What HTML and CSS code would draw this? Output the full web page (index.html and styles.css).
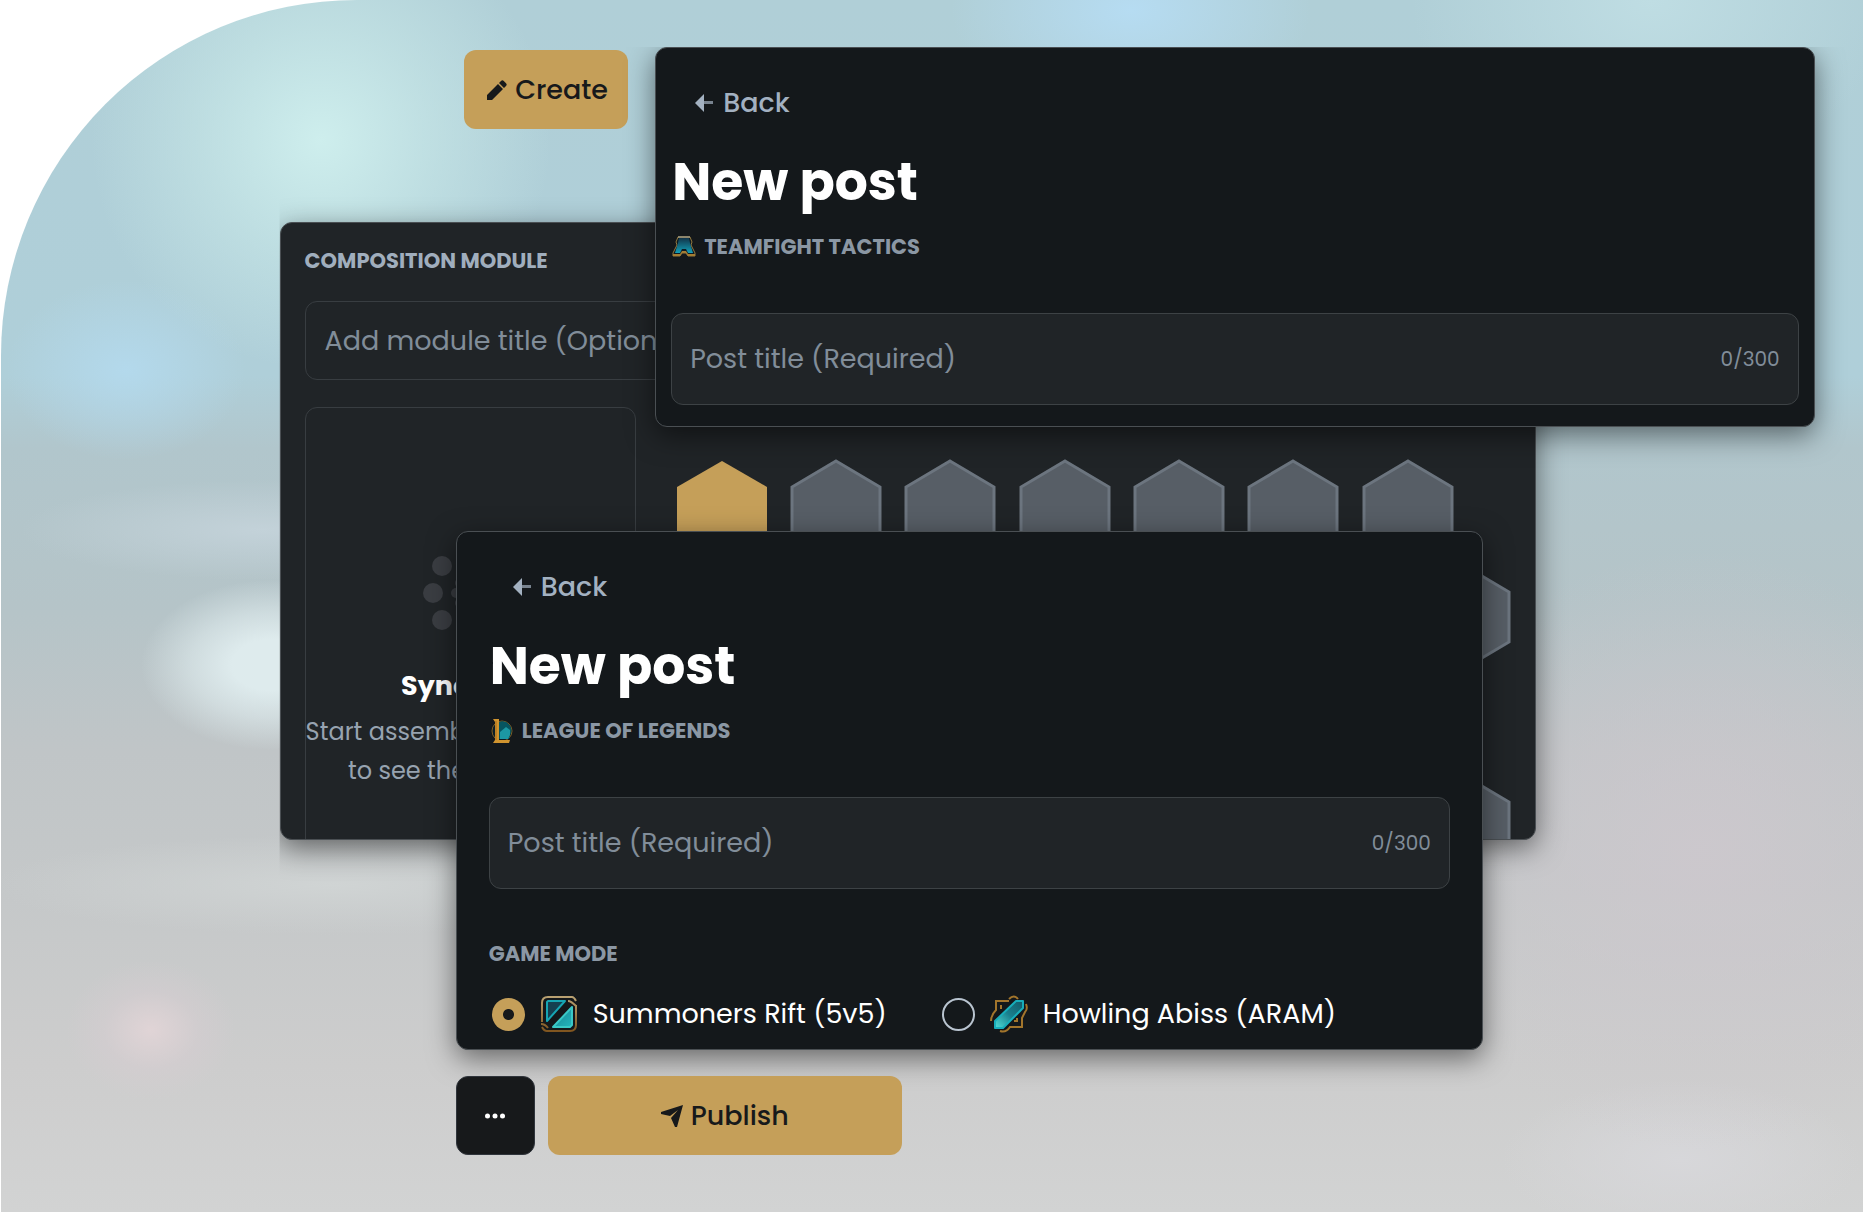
FILE: index.html
```
<!DOCTYPE html>
<html lang="en">
<head>
  <meta charset="UTF-8" />
  <meta name="viewport" content="width=device-width, initial-scale=1" />
  <title>New post</title>
  <link rel="stylesheet" href="styles.css">
</head>
<body>
  <main class="stage">
    <div class="backdrop"></div>

    <button type="button" class="btn btn-gold create-btn">
      <svg class="icon" viewBox="0 0 20 20" fill="currentColor"><path d="M0 20v-5L11 4l5 5L5 20zM12 3l2-2a2 2 0 0 1 2.800 0L19 3.200A2 2 0 0 1 19 6l-2 2z"/></svg>
      Create
    </button>

    <!-- Composition module -->
    <section class="card composition">
      <h2 class="label label-light">COMPOSITION MODULE</h2>
      <input class="module-title" type="text" placeholder="Add module title (Optional)" aria-label="Module title">

      <div class="composition-body">
        <div class="synergies">
          <svg class="synergy-icon" viewBox="0 0 94 74" fill="#3a3d42">
            <circle cx="19" cy="10" r="10"/><circle cx="75" cy="10" r="10"/>
            <circle cx="10" cy="37" r="10"/><circle cx="84" cy="37" r="10"/>
            <circle cx="19" cy="64" r="10"/><circle cx="75" cy="64" r="10"/>
            <circle cx="33" cy="37" r="5"/><circle cx="37" cy="27" r="5"/><circle cx="37" cy="47" r="5"/>
          </svg>
          <h3>Synergies</h3>
          <p>Start assembling your team<br>to see the synergies.</p>
        </div>

        <div class="board">
          <div class="board-row">
            <svg class="hex hex-active" viewBox="0 0 92 106"><path d="M46 2 91 28v50l-45 26L1 78V28z"/></svg>
            <svg class="hex" viewBox="0 0 92 106"><path d="M46 2 90 28v50l-44 26L2 78V28z"/></svg>
            <svg class="hex" viewBox="0 0 92 106"><path d="M46 2 90 28v50l-44 26L2 78V28z"/></svg>
            <svg class="hex" viewBox="0 0 92 106"><path d="M46 2 90 28v50l-44 26L2 78V28z"/></svg>
            <svg class="hex" viewBox="0 0 92 106"><path d="M46 2 90 28v50l-44 26L2 78V28z"/></svg>
            <svg class="hex" viewBox="0 0 92 106"><path d="M46 2 90 28v50l-44 26L2 78V28z"/></svg>
            <svg class="hex" viewBox="0 0 92 106"><path d="M46 2 90 28v50l-44 26L2 78V28z"/></svg>
          </div>
          <div class="board-row">
            <svg class="hex" viewBox="0 0 92 106"><path d="M46 2 90 28v50l-44 26L2 78V28z"/></svg>
            <svg class="hex" viewBox="0 0 92 106"><path d="M46 2 90 28v50l-44 26L2 78V28z"/></svg>
            <svg class="hex" viewBox="0 0 92 106"><path d="M46 2 90 28v50l-44 26L2 78V28z"/></svg>
            <svg class="hex" viewBox="0 0 92 106"><path d="M46 2 90 28v50l-44 26L2 78V28z"/></svg>
            <svg class="hex" viewBox="0 0 92 106"><path d="M46 2 90 28v50l-44 26L2 78V28z"/></svg>
            <svg class="hex" viewBox="0 0 92 106"><path d="M46 2 90 28v50l-44 26L2 78V28z"/></svg>
            <svg class="hex" viewBox="0 0 92 106"><path d="M46 2 90 28v50l-44 26L2 78V28z"/></svg>
          </div>
          <div class="board-row">
            <svg class="hex" viewBox="0 0 92 106"><path d="M46 2 90 28v50l-44 26L2 78V28z"/></svg>
            <svg class="hex" viewBox="0 0 92 106"><path d="M46 2 90 28v50l-44 26L2 78V28z"/></svg>
            <svg class="hex" viewBox="0 0 92 106"><path d="M46 2 90 28v50l-44 26L2 78V28z"/></svg>
            <svg class="hex" viewBox="0 0 92 106"><path d="M46 2 90 28v50l-44 26L2 78V28z"/></svg>
            <svg class="hex" viewBox="0 0 92 106"><path d="M46 2 90 28v50l-44 26L2 78V28z"/></svg>
            <svg class="hex" viewBox="0 0 92 106"><path d="M46 2 90 28v50l-44 26L2 78V28z"/></svg>
            <svg class="hex" viewBox="0 0 92 106"><path d="M46 2 90 28v50l-44 26L2 78V28z"/></svg>
          </div>
          <div class="board-row">
            <svg class="hex" viewBox="0 0 92 106"><path d="M46 2 90 28v50l-44 26L2 78V28z"/></svg>
            <svg class="hex" viewBox="0 0 92 106"><path d="M46 2 90 28v50l-44 26L2 78V28z"/></svg>
            <svg class="hex" viewBox="0 0 92 106"><path d="M46 2 90 28v50l-44 26L2 78V28z"/></svg>
            <svg class="hex" viewBox="0 0 92 106"><path d="M46 2 90 28v50l-44 26L2 78V28z"/></svg>
            <svg class="hex" viewBox="0 0 92 106"><path d="M46 2 90 28v50l-44 26L2 78V28z"/></svg>
            <svg class="hex" viewBox="0 0 92 106"><path d="M46 2 90 28v50l-44 26L2 78V28z"/></svg>
            <svg class="hex" viewBox="0 0 92 106"><path d="M46 2 90 28v50l-44 26L2 78V28z"/></svg>
          </div>
        </div>
      </div>
    </section>

    <!-- Teamfight Tactics post -->
    <section class="card post post-tft">
      <button type="button" class="back">
        <svg class="arrow" viewBox="0 0 18 18" fill="currentColor"><path d="M0 9 9 0v18z"/><path d="M9 7h9v3H9z" opacity=".7"/></svg>
        Back
      </button>
      <h1>New post</h1>
      <p class="label game">
        <svg class="game-icon" viewBox="0 0 24 24">
          <defs>
            <linearGradient id="tft" x1="0" y1="0" x2="0" y2="1"><stop offset="0" stop-color="#123449"/><stop offset="1" stop-color="#12a0b8"/></linearGradient>
          </defs>
          <path d="M6 2h12l2 5-1 3 4 8v3h-7l-2-3h-4l-2 3H1v-3l4-8-1-3z" fill="#0d1a22" stroke="#93793f"/>
          <path d="M7 3h10l1 5 3 10h-5l-2-4h-4l-2 4H3L6 8z" fill="url(#tft)"/>
          <path d="M1 19h7l2-3h4l2 3h7v2h-7l-2-3h-4l-2 3H1z" fill="#a47d34"/>
          <path d="M6 2h12" stroke="#c9c3ac"/>
        </svg>
        TEAMFIGHT TACTICS
      </p>
      <div class="field">
        <input type="text" placeholder="Post title (Required)" aria-label="Teamfight Tactics post title" maxlength="300">
        <span class="counter">0/300</span>
      </div>
    </section>

    <!-- League of Legends post -->
    <div class="lol-column">
      <section class="card post post-lol">
        <button type="button" class="back">
          <svg class="arrow" viewBox="0 0 18 18" fill="currentColor"><path d="M0 9 9 0v18z"/><path d="M9 7h9v3H9z" opacity=".7"/></svg>
          Back
        </button>
        <h1>New post</h1>
        <p class="label game">
          <svg class="game-icon" viewBox="0 0 24 24">
            <circle cx="12" cy="12" r="10" fill="#0b1e27" stroke="#7d5d24"/>
            <path d="M9 3a9 9 0 0 1 11 13l-1 4H9z" fill="#075560"/>
            <path d="M10 13l6-5 4 3v5l-2 4h-8z" fill="#1c98a3"/>
            <path d="M3 0h6v21h11l-1 3H3l2-3V3z" fill="#d0942f"/>
            <path d="M6 2v19" stroke="#a86c1c"/>
          </svg>
          LEAGUE OF LEGENDS
        </p>
        <div class="field">
          <input type="text" placeholder="Post title (Required)" aria-label="League of Legends post title" maxlength="300">
          <span class="counter">0/300</span>
        </div>

        <fieldset class="modes">
          <legend class="label">GAME MODE</legend>
          <div class="mode-list">
            <label class="mode">
              <input type="radio" name="mode" checked>
              <svg class="mode-icon" viewBox="0 0 38 38" fill="none">
                <defs>
                  <linearGradient id="gold" x1="0" y1="0" x2="0" y2="1"><stop offset="0" stop-color="#b9a172"/><stop offset="1" stop-color="#80551f"/></linearGradient>
                  <linearGradient id="rift" x1="0" y1="0" x2="1" y2="1"><stop offset="0" stop-color="#17828f"/><stop offset="1" stop-color="#24b5bd"/></linearGradient>
                </defs>
                <path d="M2 27V8q0-6 6-6h24q2 0 4 4M36 10v20q0 6-6 6H7q-3 0-5-4M28 6q3 0 8 5M1 29q4 0 7 4" stroke="url(#gold)" stroke-width="2"/>
                <path d="M8 6h17L7 26V7z" fill="#153f50" stroke="#16a5b3" stroke-width="2" stroke-linejoin="round"/>
                <path d="M32 12v18l-2 2H13z" fill="url(#rift)" stroke="#3ac8c6" stroke-width="2" stroke-linejoin="round"/>
              </svg>
              Summoners Rift (5v5)
            </label>
            <label class="mode">
              <input type="radio" name="mode">
              <svg class="mode-icon" viewBox="0 0 38 38" fill="none">
                <defs>
                  <linearGradient id="abyss" x1="1" y1="0" x2="0" y2="1"><stop offset="0" stop-color="#125a69"/><stop offset=".5" stop-color="#197f8d"/><stop offset="1" stop-color="#4fe0d8"/></linearGradient>
                </defs>
                <path d="M19 6H6v9q-5 5-5 11M19 4q5-5 9 0M36 9q2 5-1 8l-3 6v9H20q-4 6-10 4" stroke="#a2752c" stroke-width="2"/>
                <path d="M27 23v3h-3M11 10v4" stroke="#a2752c" stroke-width="2"/>
                <path d="M26 6h7v7L13 33H5v-7z" fill="url(#abyss)" stroke="#17aebb" stroke-width="2" stroke-linejoin="round"/>
              </svg>
              Howling Abiss (ARAM)
            </label>
          </div>
        </fieldset>
      </section>

      <div class="actions">
        <button type="button" class="btn more-btn" aria-label="More options">
          <svg class="icon" viewBox="0 0 20 20" fill="currentColor"><circle cx="2.500" cy="10" r="2.500"/><circle cx="10" cy="10" r="2.500"/><circle cx="17.500" cy="10" r="2.500"/></svg>
        </button>
        <button type="button" class="btn btn-gold publish-btn">
          <svg class="icon icon-plane" viewBox="0 0 22 22" fill="currentColor"><path d="M22 0 0 7v2l9 2 8-6zM22 0 16 22h-2l-4-9 7-8z"/></svg>
          Publish
        </button>
      </div>
    </div>
  </main>
</body>
</html>
```

FILE: styles.css
```
* {
  box-sizing: border-box;
}

body {
  margin: 0;
  background: #fff;
  font-family: Poppins, Inter, sans-serif;
  font-size: 27px;
  color: #fff;
}

h1, h2, h3, p {
  margin: 0;
}

button, input {
  font-family: inherit;
  font-size: inherit;
}

button {
  cursor: pointer;
}

.stage {
  position: relative;
  min-height: max(100vh, 1212px);
  overflow: hidden;
}

/* Blurred artwork behind the cards */
.backdrop {
  position: absolute;
  inset: 0 1px;
  border-top-left-radius: 356px;
  background:
    radial-gradient(ellipse 130px 85px at 270px 665px, rgba(222, 235, 237, 1) 30%, rgba(222, 235, 237, 0.6) 62%, rgba(222, 235, 237, 0)),
    radial-gradient(ellipse 230px 230px at 320px 140px, #ceeeed, rgba(200, 232, 232, 0.6) 50%, rgba(200, 232, 232, 0)),
    radial-gradient(ellipse 120px 90px at 125px 370px, rgba(180, 218, 238, 0.9), rgba(180, 218, 238, 0)),
    radial-gradient(ellipse 180px 110px at 1130px 10px, #b6dcf2, rgba(182, 220, 242, 0)),
    radial-gradient(ellipse 240px 180px at 1650px 0, #bfdde3, rgba(191, 221, 227, 0)),
    radial-gradient(ellipse 85px 70px at 150px 1030px, #e0d4d6, rgba(214, 205, 209, 0.5) 55%, rgba(208, 202, 206, 0)),
    radial-gradient(ellipse 300px 300px at 1700px 850px, rgba(206, 200, 206, 0.8), rgba(206, 200, 206, 0)),
    radial-gradient(ellipse 180px 80px at 1680px 1160px, #d7d7da, rgba(215, 215, 218, 0)),
    radial-gradient(ellipse 340px 50px at 330px 885px, #d0d4d4, rgba(208, 212, 212, 0)),
    radial-gradient(ellipse 240px 50px at 260px 530px, #c3d2d9, rgba(195, 210, 217, 0)),
    linear-gradient(#b0cfd7, #afcfd9 31%, #b1c6cc 37%, #b5c4c8 50%, #c0c5c7 62%, #c5c8c9 74%, #cdcdcd 88%, #d2d3d3);
}

/* Buttons */
.btn {
  display: flex;
  align-items: center;
  justify-content: center;
  gap: 8px;
  height: 79px;
  border: 0;
  border-radius: 12px;
  font-weight: 500;
}

.btn-gold {
  background: #c59f59;
  color: #17191b;
}

.icon {
  width: 20px;
  height: 20px;
}

.icon-plane {
  width: 22px;
  height: 22px;
}

.create-btn {
  position: absolute;
  top: 50px;
  left: 24.9%;
  padding: 0 20px 0 23px;
}

/* Cards */
.card {
  background: #14181b;
  border: 1px solid #4a4f53;
  border-radius: 12px;
  box-shadow: 0 8px 28px rgba(0, 0, 0, 0.5);
}

.label {
  font-size: 21px;
  font-weight: 700;
  line-height: 22px;
  color: #8b97a4;
}

.label-light {
  color: #a0aebd;
}

input::placeholder {
  color: #818d99;
  opacity: 1;
}

/* Composition module */
.composition {
  position: absolute;
  top: 222px;
  bottom: 372px;
  left: 15%;
  width: 67.4%;
  padding: 27px 24px 0;
  background: #202427;
  overflow: hidden;
  clip-path: inset(-40px -50px -50px 0);
}

.module-title {
  display: block;
  width: 100%;
  height: 79px;
  margin-top: 29px;
  padding: 0 19px;
  background: transparent;
  border: 1px solid #383d41;
  border-radius: 12px;
  color: #fff;
}

.composition-body {
  display: flex;
  gap: 40px;
  margin-top: 27px;
}

.synergies {
  flex: 0 0 331px;
  min-width: 0;
  height: 520px;
  padding-top: 148px;
  border: 1px solid #383d41;
  border-radius: 12px;
  text-align: center;
  white-space: nowrap;
}

.synergy-icon {
  display: block;
  width: 94px;
  height: 74px;
  margin: 0 auto;
}

.synergies h3 {
  margin-top: 36px;
  font-size: 27px;
  line-height: 40px;
}

.synergies p {
  margin-top: 6px;
  font-size: 24px;
  line-height: 39px;
  color: #97a3b0;
}

.board {
  flex: 1;
  padding-top: 52px;
}

.board-row {
  display: flex;
  justify-content: space-between;
  width: calc(100% - 57px);
  height: 105px;
}

.board-row:nth-child(even) {
  margin-left: 57px;
}

.hex {
  width: 92px;
  height: 106px;
  fill: #575e66;
  stroke: #6c757f;
  stroke-width: 3px;
}

.hex-active {
  fill: #c59f59;
  stroke: none;
}

/* Post cards */
.post {
  padding: 35px 32px 15px;
}

.post-tft {
  position: absolute;
  top: 47px;
  left: 35.15%;
  width: 62.2%;
  padding: 35px 15px 21px;
  clip-path: inset(0 -50px -50px -50px);
}

.back {
  display: flex;
  align-items: center;
  gap: 10px;
  height: 40px;
  padding: 0 24px;
  background: none;
  border: 0;
  font-weight: 500;
  color: #a3b1c1;
}

.arrow {
  width: 18px;
  height: 18px;
}

.post h1 {
  margin-top: 29px;
  padding-left: 1px;
  font-size: 52px;
  font-weight: 700;
  line-height: 60px;
}

.game {
  display: flex;
  align-items: center;
  gap: 8px;
  margin-top: 23px;
  padding-left: 1px;
}

.game-icon {
  width: 24px;
  height: 24px;
}

.field {
  display: flex;
  align-items: center;
  height: 92px;
  margin-top: 54px;
  padding: 0 18px;
  background: #202427;
  border: 1px solid #3d4245;
  border-radius: 12px;
}

.field input {
  flex: 1;
  min-width: 0;
  height: 100%;
  padding: 0;
  background: none;
  border: 0;
  color: #fff;
}

.counter {
  font-size: 20px;
  color: #818d99;
}

.modes {
  margin: 54px 0 0;
  padding: 0;
  border: 0;
}

.modes legend {
  padding: 0;
}

.mode-list {
  display: flex;
  gap: 55px;
  padding: 29px 3px 0;
}

.mode {
  display: flex;
  align-items: center;
  gap: 15px;
}

.mode input {
  appearance: none;
  width: 33px;
  height: 33px;
  margin: 0;
  border: 2px solid #b9c4d0;
  border-radius: 50%;
}

.mode input:checked {
  border: 0;
  background: radial-gradient(circle, #17191b 5px, #c59f59 6px);
}

.mode-icon {
  width: 38px;
  height: 38px;
}

.lol-column {
  position: absolute;
  top: 531px;
  left: 24.45%;
  width: 55.1%;
}

.actions {
  display: flex;
  gap: 13px;
  margin-top: 26px;
}

.more-btn {
  width: 79px;
  background: #17191b;
  border: 1px solid #30353c;
  color: #fff;
}

.publish-btn {
  flex: 0 1 354px;
}
```
